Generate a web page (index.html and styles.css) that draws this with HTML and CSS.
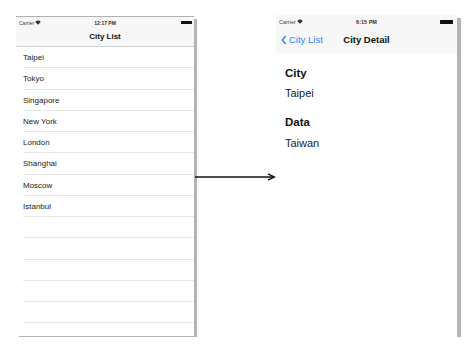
FILE: index.html
```html
<!DOCTYPE html>
<html>
<head>
<meta charset="utf-8">
<link rel="stylesheet" href="styles.css">
</head>
<body>
<div class="stage">
  <div class="phone phone-left">
    <div class="status">
      <span class="carrier">Carrier <svg class="wifi" viewBox="0 0 8 6" width="6" height="5"><path d="M4 6 L0.3 2.2 A5.4 5.4 0 0 1 7.7 2.2 Z" fill="#333"/></svg></span>
      <span class="time">12:17 PM</span>
      <span class="battery"></span>
    </div>
    <div class="nav nav-left"><span class="title">City List</span></div>
    <ul class="list">
      <li>Taipei</li>
      <li>Tokyo</li>
      <li>Singapore</li>
      <li>New York</li>
      <li>London</li>
      <li>Shanghai</li>
      <li>Moscow</li>
      <li>Istanbul</li>
      <li></li>
      <li></li>
      <li></li>
      <li></li>
      <li></li>
    </ul>
  </div>
  <div class="arrow">
    <svg width="82" height="8" viewBox="0 0 82 8"><line x1="1" y1="4" x2="79" y2="4" stroke="#111" stroke-width="1.4"/><path d="M74 0.8 L80.5 4 L74 7.2" fill="none" stroke="#111" stroke-width="1.4"/></svg>
  </div>
  <div class="phone phone-right">
    <div class="top-right">
      <div class="status status-right">
        <span class="carrier">Carrier <svg class="wifi" viewBox="0 0 8 6" width="6" height="5"><path d="M4 6 L0.3 2.2 A5.4 5.4 0 0 1 7.7 2.2 Z" fill="#333"/></svg></span>
        <span class="time">6:15 PM</span>
        <span class="battery"></span>
      </div>
      <div class="nav nav-right">
        <span class="back"><svg viewBox="0 0 6 11" width="6" height="10"><path d="M5 1 L1 5.5 L5 10" fill="none" stroke="#2f86f6" stroke-width="1.6"/></svg>City List</span>
        <span class="title title-right">City Detail</span>
      </div>
    </div>
    <div class="detail">
      <div class="label">City</div>
      <div class="value">Taipei</div>
      <div class="label label-2">Data</div>
      <div class="value value-2">Taiwan</div>
    </div>
  </div>
</div>
</body>
</html>
```

FILE: styles.css
```css
* { box-sizing: border-box; }
html, body { margin: 0; padding: 0; background: #fff; }
body { font-family: "Liberation Sans", Arial, sans-serif; color: #111; }

.stage {
  display: flex;
  align-items: flex-start;
  padding: 15px 0 0 16px;
}

.phone {
  background: #fff;
  overflow: hidden;
  box-shadow: 3px 3px 0 #b4b4b4;
}

.phone-left {
  width: 178px;
  height: 320px;
  margin-top: 1px;
  border-top: 1px solid #b0b0b0;
}

.status {
  position: relative;
  height: 11px;
  background: #f7f7f7;
  display: flex;
  align-items: center;
  justify-content: space-between;
  padding: 0 2px 0 3px;
  font-size: 5px;
  color: #444;
}
.carrier { display: flex; align-items: center; gap: 1px; }
.wifi { display: block; }
.time {
  position: absolute;
  left: 0;
  right: 0;
  text-align: center;
  font-weight: bold;
  font-size: 5px;
  color: #333;
}
.battery {
  width: 11px;
  height: 3px;
  background: #111;
  border-radius: 0.5px;
}

.nav {
  background: #f7f7f7;
  display: flex;
  align-items: center;
  justify-content: center;
}
.nav-left {
  height: 19px;
  border-bottom: 1px solid #d2d2d2;
  padding-bottom: 1px;
}
.title {
  font-weight: bold;
  font-size: 8px;
  color: #111;
}

.list {
  list-style: none;
  margin: 0;
  padding: 0 0 0 8px;
}
.list li {
  height: 21.25px;
  border-bottom: 1px solid #e6e6e6;
  font-size: 8px;
  line-height: 21px;
  margin-left: -1px;
  color: #1a1a1a;
}

.arrow {
  width: 82px;
  margin-top: 158px;
}
.arrow svg { display: block; }

.phone-right {
  width: 181px;
  height: 322px;
  box-shadow: 4px 3px 0 #b4b4b4;
}
.top-right { background: #f7f7f7; }
.status-right {
  height: 12px;
  padding: 1px 4px 0 3px;
  font-size: 5.5px;
}
.status-right .time { font-size: 5.5px; }
.status-right .battery { width: 13px; height: 4px; }

.nav-right {
  position: relative;
  height: 26px;
  padding-bottom: 1px;
}
.back {
  position: absolute;
  left: 5px;
  display: flex;
  align-items: center;
  gap: 2px;
  color: #2f86f6;
  font-size: 9.5px;
}
.back svg { display: block; }
.title-right { font-size: 9.5px; }

.detail { padding: 13px 0 0 9px; }
.label {
  font-weight: bold;
  font-size: 11.5px;
  line-height: 14px;
  color: #111;
}
.value {
  font-size: 11px;
  line-height: 14px;
  margin-top: 6px;
  color: #222;
}
.label-2 { margin-top: 15px; }
.value-2 { margin-top: 7px; }
```
